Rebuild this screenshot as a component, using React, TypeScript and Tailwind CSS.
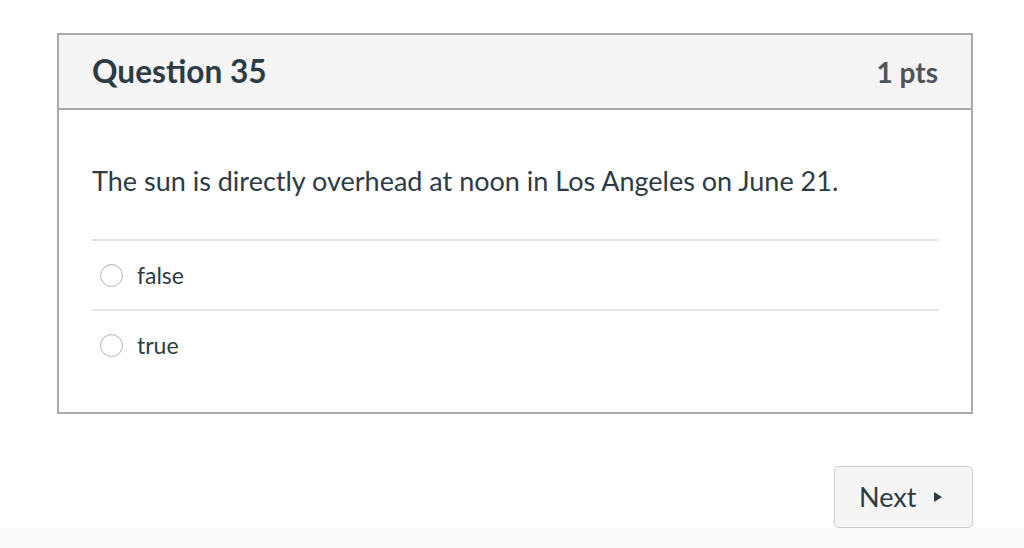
export default function App() {
  return (
    <div className="flex h-[548px] w-[1024px] flex-col bg-white font-['Lato','Open_Sans',sans-serif] text-[#2d3b45]">
      <div className="flex-1 pt-[33px] pl-[57px]">
        <div className="w-[916px] border-2 border-[#aaaaaa]">
          <div className="flex h-[75px] items-center justify-between border-b-2 border-[#aaaaaa] bg-[#f5f5f5] px-[33px]">
            <h2 className="text-[31.6px] font-bold leading-none">Question 35</h2>
            <span className="text-[28px] font-bold leading-none text-[#4f5458]">1 pts</span>
          </div>
          <div className="px-[33px] pt-[52px] pb-[33px]">
            <p className="text-[27px] leading-[38px]">
              The sun is directly overhead at noon in Los Angeles on June 21.
            </p>
            <div className="mt-[39px]">
              {["false", "true"].map((a) => (
                <label
                  key={a}
                  className="flex h-[70px] items-center gap-[14px] border-t-2 border-[#e4e4e4] pl-[8px]"
                >
                  <span className="h-[23px] w-[23px] rounded-full border border-[#b5b5b5] bg-white shadow-[inset_0_1px_1px_rgba(0,0,0,0.06)]" />
                  <span className="text-[23px] leading-none">{a}</span>
                </label>
              ))}
            </div>
          </div>
        </div>
        <div className="mt-[52px] flex w-[916px] justify-end">
          <button
            type="button"
            className="flex h-[62px] w-[139px] items-center gap-[17px] rounded-[5px] border border-[#c7cdd1] bg-[#f5f5f5] pl-[24px] text-[27px]"
          >
            Next
            <svg width="10" height="12" viewBox="0 0 10 12">
              <path d="M1 1L9 6L1 11Z" fill="#2d3b45" />
            </svg>
          </button>
        </div>
      </div>
      <div className="h-[20px] bg-[#fafafa]" />
    </div>
  );
}
